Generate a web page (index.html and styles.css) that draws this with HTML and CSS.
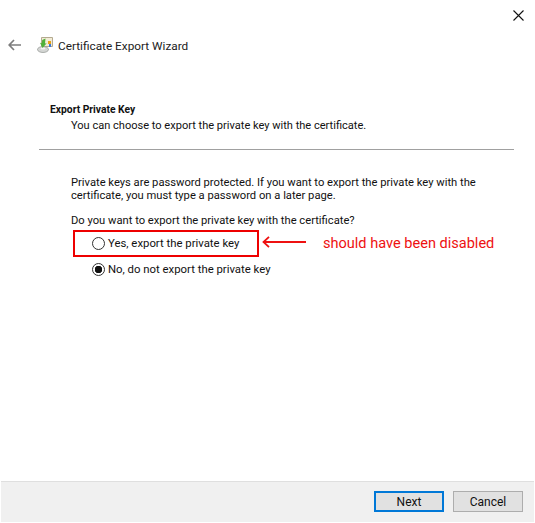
FILE: index.html
```html
<!DOCTYPE html>
<html lang="en">
<head>
<meta charset="utf-8">
<title>Certificate Export Wizard</title>
<link rel="stylesheet" href="styles.css">
</head>
<body>
<div class="window">
  <div class="titlebar">
    <svg class="close" width="11" height="11" viewBox="0 0 11 11"><path d="M.5.5l10 10M10.500.5l-10 10" stroke="#111" stroke-width="1.100" fill="none"/></svg>
  </div>
  <div class="navbar">
    <svg class="back" width="13" height="12" viewBox="0 0 13 12"><path d="M6 1L1.200 6 6 11M1.500 6H13" stroke="#7d7d7d" stroke-width="1.700" fill="none"/></svg>
    <svg class="wizard-icon" width="16" height="16" viewBox="0 0 16 16">
      <path d="M4.500.5h11v9h-11z" fill="#f3ecd6" stroke="#b4aa90"/>
      <path d="M11 4h3v3h-3z" fill="#e8a317"/>
      <path d="M12 7h2v3h-2z" fill="#3b78d8"/>
      <ellipse cx="6" cy="12.500" rx="5.500" ry="3" fill="#d4d6d4" stroke="#8f938f" stroke-width=".7"/>
      <ellipse cx="6" cy="11.500" rx="2.500" ry="1" fill="#f4f4f4"/>
      <path d="M8.500 1.500L8 6.500l1.700-.3L5.500 11 3 5.800l1.800.5L5.200 3z" fill="#4fb03a"/>
    </svg>
    <span class="wizard-title">Certificate Export Wizard</span>
  </div>
  <div class="intro">
    <h1 class="intro-title">Export Private Key</h1>
    <p class="intro-text">You can choose to export the private key with the certificate.</p>
  </div>
  <hr class="separator">
  <div class="content">
    <p class="para">Private keys are password protected. If you want to export the private key with the certificate, you must type a password on a later page.</p>
    <p class="question">Do you want to export the private key with the certificate?</p>
    <div class="options">
      <div class="option">
        <span class="radio"></span><span>Yes, export the private key</span>
        <div class="annotation">
          <span class="red-box"></span>
          <svg class="red-arrow" width="44" height="12" viewBox="0 0 44 12"><path d="M7 .8L1.500 6 7 11.200M2 6H44" stroke="#ee1111" stroke-width="1.800" fill="none"/></svg>
          <span class="red-text">should have been disabled</span>
        </div>
      </div>
      <div class="option">
        <span class="radio checked"></span><span>No, do not export the private key</span>
      </div>
    </div>
  </div>
  <div class="footer">
    <button class="btn btn-default">Next</button>
    <button class="btn">Cancel</button>
  </div>
</div>
</body>
</html>
```

FILE: styles.css
```css
* { box-sizing: border-box; }
html, body { margin: 0; padding: 0; background: #fff; }
body { font-family: Roboto, "Open Sans", sans-serif; font-size: 11.200px; color: #111; }
.window { width: 535px; height: 523px; display: flex; flex-direction: column; }
.titlebar { height: 30px; display: flex; justify-content: flex-end; padding: 10px 11px 0 0; }
.navbar { height: 30px; display: flex; align-items: center; padding-left: 8px; }
.back { margin-right: 16px; }
.wizard-icon { margin-right: 5px; }
.wizard-title { font-size: 11.800px; color: #222; padding-top: 1px; }
.intro { padding: 42px 0 0 50px; }
.intro-title { margin: 0; font-size: 10.300px; font-weight: 700; line-height: 15px; }
.intro-text { margin: 0; padding: 2px 0 0 21px; line-height: 13px; font-size: 11.050px; }
.separator { margin: 17px 21px 0 39px; border: 0; height: 1px; background: #a0a0a0; }
.content { padding: 26px 0 0 71px; flex: 1; }
.para { margin: 0; line-height: 13px; width: 425px; }
.question { margin: 12px 0 0; line-height: 13px; }
.options { margin-top: 3px; padding-left: 21px; font-size: 11.350px; }
.option { position: relative; display: flex; align-items: center; height: 26px; }
.radio { width: 13px; height: 13px; border: 1px solid #333; border-radius: 50%; margin-right: 3px; flex: none; background: #fff; }
.radio.checked { background: radial-gradient(circle, #111 0 3.500px, #fff 4px); }
.annotation { position: absolute; left: 0; top: 0; }
.red-box { position: absolute; left: -19px; top: 0; width: 186px; height: 27px; border: 2px solid #ee0000; }
.red-arrow { position: absolute; left: 170px; top: 6px; }
.red-text { position: absolute; left: 231px; top: 4px; white-space: nowrap; font-size: 14.550px; line-height: 20px; color: #ee1111; }
.footer { height: 41px; margin: 0 1px 1px; background: #f0f0f0; border-top: 1px solid #dfdfdf; display: flex; justify-content: flex-end; gap: 9px; padding: 9px 11px 0 0; }
.btn { width: 70px; height: 21px; padding: 0; font: inherit; font-size: 12px; color: #111; background: #e1e1e1; border: 1px solid #adadad; }
.btn-default { border: 2px solid #0078d7; }
```
